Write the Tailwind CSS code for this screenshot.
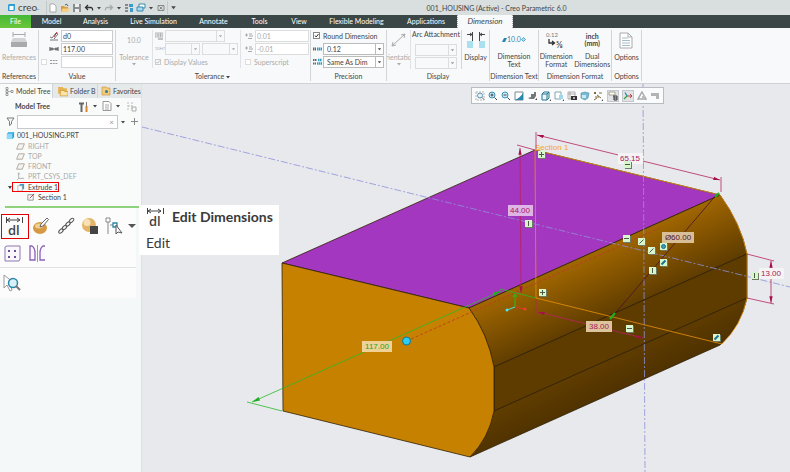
<!DOCTYPE html>
<html lang="en">
<head>
    <meta charset="UTF-8">
    <meta name="viewport" content="width=device-width, initial-scale=1.0">
    <script src="https://cdn.jsdelivr.net/npm/@tailwindcss/browser@4"></script>
    <title>001_HOUSING (Active) - Creo Parametric 6.0</title>
</head>
<body class="flex min-h-screen flex-col overflow-hidden bg-[#e8e9ed] font-['Lato','Open_Sans',sans-serif] text-[7px] leading-[8px] text-[#444]">

    <!-- shared icons -->
    <svg class="hidden">
        <symbol id="down" viewBox="0 0 6 6"><path d="M1 2h4L3 4.5z" fill="currentColor"/></symbol>
        <symbol id="cube" viewBox="0 0 10 10"><path d="M1 3l2-2h6v6L7 9H1z" fill="#2aa3dc"/><path d="M1 3h6v6H1z" fill="#8fd9f7"/><path d="M1 3l2-2h6L7 3z" fill="#55bfea"/></symbol>
        <symbol id="plane" viewBox="0 0 10 10"><path d="M3 2h6.300L7 8H.7z" fill="#f5f3ef" stroke="#aaa69b"/></symbol>
        <symbol id="dims" viewBox="0 0 8 6"><path d="M0 1.500h8M0 4.500h8" stroke="#999" stroke-dasharray="2 .7" /></symbol>
        <symbol id="editdim" viewBox="0 0 20 20"><path d="M2 4h13M5 2L2 4l3 2M12 2l3 2-3 2M1.500 1v6M17.500 1v6" fill="none" stroke="#444"/><text x="3" y="19" font-size="13" font-weight="600" font-family="Open Sans" fill="#444">dl</text></symbol>
    </svg>

    <header class="flex h-[15px] shrink-0 items-center bg-[#d9dfde]">
        <div class="flex w-[47px] shrink-0 items-center gap-[2px] border-r border-[#c3c9c8] pl-[7px] text-[10px] leading-[12px] text-[#444]">
            <svg class="size-[9px]" viewBox="0 0 9 9"><path d="M1 2l1-1h6v6L7 8H1z" fill="#2d9fd3"/><path d="M2.500 3h4v4h-4z" fill="#fff"/></svg>
            <span>creo<span class="text-[6px]">·</span></span>
        </div>
        <button aria-label="New" class="flex w-[12px] justify-center"><svg class="size-[10px]" viewBox="0 0 10 10"><path d="M2 1h4l2 2v6H2z" fill="#fff" stroke="#999" stroke-width=".8"/></svg></button>
        <button aria-label="Open" class="flex w-[12px] justify-center"><svg class="size-[10px]" viewBox="0 0 10 10"><path d="M1 3h3l1 1h3v5H1z" fill="#d99b3e"/><path d="M2.500 5.500H10L8 9H1z" fill="#f6cf7e"/><path d="M5 2q2-2 3 1" fill="none" stroke="#555"/></svg></button>
        <button aria-label="Save" class="flex w-[12px] justify-center"><svg class="size-[10px]" viewBox="0 0 10 10"><path d="M1 1h8v8H1z" fill="#878d91"/><path d="M3 1h4v3H3zM3 6h4v3H3z" fill="#eee"/></svg></button>
        <button aria-label="Undo" class="flex w-[12px] justify-center"><svg class="size-[10px]" viewBox="0 0 10 10"><path d="M2 4.500h4.500q2.500 0 2 3M4 2L1.500 4.500 4 7" fill="none" stroke="#333" stroke-width="1.300"/></svg></button>
        <button aria-label="Undo list" class="flex w-[8px] justify-center"><svg class="size-[6px]"><use href="#down"/></svg></button>
        <button aria-label="Redo" class="flex w-[12px] justify-center"><svg class="size-[10px]" viewBox="0 0 10 10"><path d="M8 4.500H3.500q-2.500 0-2 3M6 2l2.500 2.500L6 7" fill="none" stroke="#a5abab" stroke-width="1.300"/></svg></button>
        <button aria-label="Redo list" class="flex w-[8px] justify-center"><svg class="size-[6px]"><use href="#down"/></svg></button>
        <button aria-label="Regenerate" class="flex w-[12px] justify-center"><svg class="size-[10px]" viewBox="0 0 10 10"><path d="M1 1h3v2H1zM1 4h3v2H1zM1 7h3v2H1z" fill="#888"/><path d="M5 1h4v3H5zM6 5h3v4H6z" fill="#3b9ccc"/></svg></button>
        <button aria-label="Windows" class="flex w-[12px] justify-center"><svg class="size-[10px]" viewBox="0 0 10 10"><path d="M3 1h6v4H3z" fill="#fff" stroke="#3b8ab0"/><path d="M1 4h6v4H1z" fill="#a9dbf0" stroke="#3b8ab0"/></svg></button>
        <button aria-label="Window list" class="flex w-[8px] justify-center"><svg class="size-[6px]"><use href="#down"/></svg></button>
        <button aria-label="Close" class="flex w-[12px] justify-center"><svg class="size-[8px]" viewBox="0 0 8 8"><path d="M1 1.500h6v5H1zM2.500 2.500l3 3M5.500 2.500l-3 3" fill="none" stroke="#666" stroke-width=".7"/></svg></button>
        <button aria-label="Customize" class="flex w-[12px] justify-center border-l border-[#c3c9c8] py-[3px]"><svg class="size-[7px]"><use href="#down"/></svg></button>
        <h1 class="flex-1 pl-[24px] text-center">001_HOUSING (Active) - Creo Parametric 6.0</h1>
    </header>

    <nav class="flex h-[13px] shrink-0 items-stretch bg-[#3b4646] text-center leading-[13px] text-white">
        <a href="#" class="w-[31px] shrink-0 bg-linear-to-b from-[#44b83a] to-[#6bc638]">File</a>
        <a href="#" class="w-[41px] shrink-0">Model</a>
        <a href="#" class="w-[47px] shrink-0">Analysis</a>
        <a href="#" class="w-[69px] shrink-0">Live Simulation</a>
        <a href="#" class="w-[51px] shrink-0">Annotate</a>
        <a href="#" class="w-[41px] shrink-0">Tools</a>
        <a href="#" class="w-[38px] shrink-0">View</a>
        <a href="#" class="w-[77px] shrink-0">Flexible Modeling</a>
        <a href="#" class="w-[62px] shrink-0">Applications</a>
        <a href="#" class="w-[56px] shrink-0 border-x border-dotted border-[#aaa] bg-[#f8f9fb] text-[8px] text-[#444] italic">Dimension</a>
    </nav>

    <section class="flex h-[56px] shrink-0 border-b border-[#cfd3d6] bg-[#f8f9fb] py-[2px] whitespace-nowrap">
        <div class="flex w-[39px] shrink-0 flex-col items-center justify-between border-r border-[#d2d6d9]">
            <button class="flex flex-col items-center gap-[5px] pt-[2px] text-[#aaa]" disabled>
                <svg class="h-[16px] w-[18px]" viewBox="0 0 18 16"><path d="M3 0v5M15 0v5M3 2.500h12" stroke="#aaa" fill="none"/><path d="M3 6l-2 4h16l-2-4z" fill="#d3d3d3"/><path d="M1 10h16v5H1z" fill="#aaa"/></svg>
                References
            </button>
            <span class="leading-[9px]">References</span>
        </div>

        <div class="flex w-[77px] shrink-0 flex-col items-center justify-between border-r border-[#d2d6d9]">
            <div class="flex flex-col gap-px">
                <label class="flex items-center justify-end gap-[2px]">
                    <svg class="size-[10px]" viewBox="0 0 10 10"><path d="M1 9h8M1 6l2 1 4-5 2 1-4 5" fill="none" stroke="#777"/><path d="M5 6l3-5" stroke="#a33"/></svg>
                    <input aria-label="Name" value="d0" class="h-[12px] w-[52px] border border-[#ccc] bg-white px-px">
                </label>
                <label class="flex items-center justify-end gap-[2px]">
                    <svg class="h-[6px] w-[10px]" viewBox="0 0 10 6"><path d="M1 1v4M9 1v4M1 3h8M3 1.500v3M7 1.500v3" stroke="#444" fill="none"/></svg>
                    <input aria-label="Nominal value" value="117.00" class="h-[12px] w-[52px] border border-[#ccc] bg-white px-px">
                </label>
                <div class="flex items-center justify-end gap-[2px]">
                    <input type="checkbox" aria-label="Override" disabled class="size-[6px] appearance-none border border-[#ddd] bg-white">
                    <svg class="h-[6px] w-[10px]"><use href="#dims"/></svg>
                    <input aria-label="Override value" disabled class="h-[12px] w-[52px] border border-[#d5d5d5] bg-white">
                </div>
            </div>
            <span class="leading-[9px]">Value</span>
        </div>

        <div class="flex w-[195px] shrink-0 flex-col items-center justify-between border-r border-[#d2d6d9] text-[#aaa]">
            <div class="flex w-full">
                <button disabled class="flex w-[37px] flex-col items-center border-r border-[#e0e2e5] pt-[6px]">
                    <span class="pb-[9px]">10.0</span>Tolerance<svg class="size-[6px]"><use href="#down"/></svg>
                </button>
                <div class="flex w-[88px] flex-col gap-px border-r border-[#e0e2e5] pl-[2px]">
                    <div class="flex items-center gap-[2px]">
                        <svg class="size-[8px]" viewBox="0 0 8 8"><path d="M0 1h8v4H0zM0 3h8M3 1v4M5.500 1v4" fill="none" stroke="#aaa" stroke-width=".8"/><path d="M3 7h5" stroke="#888"/></svg>
                        <div class="flex h-[12px] w-[60px] items-center border border-[#ddd]"><select aria-label="Tolerance table" disabled class="min-w-0 flex-1 appearance-none"><option></option></select><svg class="h-full w-[8px] border-l border-[#ddd] p-px"><use href="#down"/></svg></div>
                    </div>
                    <div class="flex items-center gap-[2px]">
                        <span class="w-[8px] text-[4px]">10H7</span>
                        <div class="flex h-[12px] w-[35px] items-center border border-[#ddd]"><select aria-label="Table letter" disabled class="min-w-0 flex-1 appearance-none"><option></option></select><svg class="h-full w-[8px] border-l border-[#ddd] p-px"><use href="#down"/></svg></div>
                        <div class="flex h-[12px] w-[36px] items-center border border-[#ddd]"><select aria-label="Table number" disabled class="min-w-0 flex-1 appearance-none"><option></option></select><svg class="h-full w-[8px] border-l border-[#ddd] p-px"><use href="#down"/></svg></div>
                    </div>
                    <label class="flex h-[12px] items-center gap-[3px]">
                        <span class="grid size-[6px]"><input type="checkbox" checked disabled class="col-start-1 row-start-1 size-[6px] appearance-none border border-[#ccc]"><svg class="col-start-1 row-start-1 size-[6px]" viewBox="0 0 6 6"><path d="M1.500 3l1 1.200L4.800 1.500" fill="none" stroke="#aaa" stroke-width=".8"/></svg></span>
                        Display Values
                    </label>
                </div>
                <div class="flex flex-col gap-px pl-[4px]">
                    <label class="flex items-center gap-[2px]"><svg class="size-[8px]" viewBox="0 0 8 8"><path d="M0 3h3M1.500 1.500v3M4 2h3M4 4h4M3 6.500h4" stroke="#aaa"/></svg><input aria-label="Upper tolerance" disabled value="0.01" class="h-[12px] w-[54px] border border-[#ddd] bg-white px-px"></label>
                    <label class="flex items-center gap-[2px]"><svg class="size-[8px]" viewBox="0 0 8 8"><path d="M0 3h3M1.500 1.500v3M4 2h3M4 4h4M3 6.500h4" stroke="#aaa"/></svg><input aria-label="Lower tolerance" disabled value="-0.01" class="h-[12px] w-[54px] border border-[#ddd] bg-white px-px"></label>
                    <label class="flex h-[12px] items-center gap-[3px]"><input type="checkbox" disabled class="size-[6px] appearance-none border border-[#ddd] bg-white">Superscript</label>
                </div>
            </div>
            <button class="flex items-center gap-px leading-[9px] text-[#444]">Tolerance<svg class="size-[6px]"><use href="#down"/></svg></button>
        </div>

        <div class="flex w-[76px] shrink-0 flex-col items-center justify-between border-r border-[#d2d6d9]">
            <div class="flex flex-col gap-px">
                <label class="flex h-[11px] items-center gap-[3px]">
                    <span class="grid size-[7px]"><input type="checkbox" checked class="col-start-1 row-start-1 size-[7px] appearance-none border border-[#888] bg-white"><svg class="pointer-events-none col-start-1 row-start-1 size-[7px]" viewBox="0 0 7 7"><path d="M2 3.500l1.200 1.500L5.500 2" fill="none" stroke="#333"/></svg></span>
                    Round Dimension
                </label>
                <div class="flex items-center gap-px pt-px">
                    <svg class="h-[6px] w-[9px]" viewBox="0 0 9 6"><path d="M0 3h3" stroke="#666" stroke-width="3" stroke-dasharray="1.500 .5"/><path d="M4 3h5" stroke="#2b9cc4" stroke-width="3" stroke-dasharray="1.500 .5"/></svg>
                    <div class="flex h-[12px] w-[61px] items-center border border-[#bbb] bg-white"><select aria-label="Decimal places" class="min-w-0 flex-1 appearance-none pl-[3px]"><option>0.12</option></select><svg class="h-full w-[8px] border-l border-[#bbb] p-px"><use href="#down"/></svg></div>
                </div>
                <div class="flex items-center gap-px">
                    <svg class="h-[8px] w-[9px]" viewBox="0 0 9 8"><path d="M0 2h4M0 5.500h3" stroke="#666" stroke-width="2" stroke-dasharray="1.500 .5"/><path d="M5 2h4M4 5.500h5" stroke="#2b9cc4" stroke-width="2.500" stroke-dasharray="1.500 .5"/></svg>
                    <div class="flex h-[12px] w-[61px] items-center border border-[#bbb] bg-white"><select aria-label="Tolerance decimal places" class="min-w-0 flex-1 appearance-none pl-[3px]"><option>Same As Dim</option></select><svg class="h-full w-[8px] border-l border-[#bbb] p-px"><use href="#down"/></svg></div>
                </div>
            </div>
            <span class="leading-[9px]">Precision</span>
        </div>

        <div class="flex w-[103px] shrink-0 flex-col justify-between border-r border-[#d2d6d9]">
            <div class="flex">
                <button disabled class="flex w-[24px] flex-col items-center overflow-hidden border-r border-[#e0e2e5] pt-px text-[#aaa]">
                    <svg class="h-[22px] w-[20px]" viewBox="0 0 20 22"><path d="M3 15L16 3M4 11l-1 4 4-1M12 4l4-1-1 4" fill="none" stroke="#aaa"/></svg>
                    rientatic<svg class="size-[6px]"><use href="#down"/></svg>
                </button>
                <div class="flex w-[51px] flex-col items-center gap-px border-r border-[#d2d6d9]">
                    <span class="h-[13px] leading-[8px]">Arc Attachment</span>
                    <div class="flex h-[12px] w-[42px] items-center border border-[#ddd]"><select aria-label="First arc" disabled class="min-w-0 flex-1 appearance-none"><option></option></select><svg class="h-full w-[8px] border-l border-[#ddd] p-px text-[#999]"><use href="#down"/></svg></div>
                    <div class="flex h-[12px] w-[42px] items-center border border-[#ddd]"><select aria-label="Second arc" disabled class="min-w-0 flex-1 appearance-none"><option></option></select><svg class="h-full w-[8px] border-l border-[#ddd] p-px text-[#999]"><use href="#down"/></svg></div>
                </div>
                <button class="flex flex-1 flex-col items-center gap-[4px] pt-px">
                    <svg class="h-[18px] w-[18px]" viewBox="0 0 18 18"><path d="M0 10h6v7H0zM12 10h6v7h-6z" fill="#aadff0"/><path d="M5.500 1v9M12.500 1v9M0 3.500h5M13 3.500h5M3 2l2 1.500L3 5M15 2l-2 1.500L15 5" fill="none" stroke="#444"/></svg>
                    Display
                </button>
            </div>
            <span class="text-center leading-[9px]">Display</span>
        </div>

        <div class="flex w-[49px] shrink-0 flex-col items-center justify-between border-r border-[#d2d6d9]">
            <button class="flex flex-col items-center gap-[9px] pt-[5px]">
                <span class="flex items-center text-[#3986a8]"><svg class="h-[7px] w-[5px]" viewBox="0 0 5 7"><path d="M0 6l2-4h3L3 6z" fill="#2387b5"/></svg>10.0<svg class="size-[5px]" viewBox="0 0 5 5"><path d="M2.500.5l2 2-2 2-2-2z" fill="#aadff0" stroke="#2387b5" stroke-width=".7"/></svg></span>
                <span>Dimension<br>Text</span>
            </button>
            <span class="leading-[9px]">Dimension Text</span>
        </div>

        <div class="flex w-[73px] shrink-0 flex-col items-center justify-between border-r border-[#d2d6d9]">
            <div class="flex w-full justify-around">
                <button class="flex flex-col items-center gap-[2px]">
                    <svg class="h-[20px] w-[20px]" viewBox="0 0 20 20" font-family="Lato"><text x="0" y="7" font-size="6" fill="#777">0.12</text><path d="M3 9v4h5M6 11l2.500 2L6 15" fill="none" stroke="#333" stroke-width="1.300"/><text x="10" y="18" font-size="9" fill="#333">⅝</text></svg>
                    <span>Dimension<br>Format</span>
                </button>
                <button class="flex flex-col items-center gap-[5px]">
                    <span class="pt-[3px] leading-[7px] font-bold">inch<br>(mm)</span>
                    <span>Dual<br>Dimensions</span>
                </button>
            </div>
            <span class="leading-[9px]">Dimension Format</span>
        </div>

        <div class="flex w-[30px] shrink-0 flex-col items-center justify-between border-r border-[#d2d6d9]">
            <button class="flex flex-col items-center gap-[4px] pt-[2px]">
                <svg class="h-[17px] w-[14px]" viewBox="0 0 14 17"><path d="M1 1h8l4 4v11H1z" fill="#fff" stroke="#aaa"/><path d="M9 1v4h4" fill="none" stroke="#aaa"/><path d="M3 6h6M3 8.500h8M3 11h8M3 13.500h8" stroke="#a3bfca"/></svg>
                Options
            </button>
            <span class="leading-[9px]">Options</span>
        </div>
    </section>

    <main class="relative flex flex-1">
        <aside class="flex w-[142px] shrink-0 flex-col border-r border-[#dce1e4] bg-[#f5f8f9]">
            <div class="flex h-[14px] shrink-0 items-center bg-[#e5e9ea] whitespace-nowrap">
                <button class="flex h-full w-[52px] items-center gap-[2px] bg-[#f9fbfb] pl-[5px]"><svg class="size-[9px]" viewBox="0 0 9 9"><path d="M2 1v7M2 4.500h5" stroke="#888" fill="none" stroke-width=".6"/><path d="M1 .5h2v2H1zM1 3.500h2v2H1zM1 6.500h2v2H1zM6 3.500h2v2H6z" fill="#fff" stroke="#888" stroke-width=".8"/></svg>Model Tree</button>
                <button class="flex h-full w-[46px] items-center gap-[2px] overflow-hidden border-x border-[#d2d6d9] pl-[4px]"><svg class="size-[11px] shrink-0" viewBox="0 0 10 10"><path d="M1 1h4l1 1h3v5H1z" fill="#e8b453"/><path d="M3 4h3l1 1h3v4H3z" fill="#fbe3a5" stroke="#c78e2f" stroke-width=".6"/></svg>Folder B</button>
                <button class="flex h-full flex-1 items-center gap-[2px] pl-[3px]"><svg class="size-[10px]" viewBox="0 0 10 10"><path d="M1 1h4l1 1h3v7H1z" fill="#f3cc7b" stroke="#c78e2f" stroke-width=".6"/><circle cx="5.500" cy="5.500" r="1.500" fill="#2e7c9a"/></svg>Favorites</button>
            </div>
            <div class="flex h-[16px] shrink-0 items-center bg-[#f9fbfb] pr-[4px] pl-[15px]">
                <h2 class="flex-1 font-bold">Model Tree</h2>
                <button aria-label="Settings" class="flex items-center gap-[3px] pr-[4px]"><svg class="size-[11px]" viewBox="0 0 11 11"><path d="M1 2.500h5M3.500 3v8" stroke="#666" stroke-width="2"/><path d="M8.500 1v4" stroke="#777"/><path d="M8.500 5v6" stroke="#d4872b" stroke-width="2"/></svg><svg class="size-[6px]"><use href="#down"/></svg></button>
                <button aria-label="Show" class="flex items-center gap-[3px] pr-[5px]"><svg class="size-[10px]" viewBox="0 0 10 10"><path d="M1 .5h6l2 2v7H1z" fill="#fff" stroke="#999"/><path d="M3 4h4M3 6h4M3 8h4" stroke="#888" stroke-width=".7"/></svg><svg class="size-[6px]"><use href="#down"/></svg></button>
                <button aria-label="Expand" class="flex"><svg class="size-[11px]" viewBox="0 0 11 11"><path d="M2 1v9M2 5h4M6 1v7" stroke="#bbb" stroke-dasharray="2 1" fill="none"/><path d="M6 6h4v4H6z" fill="none" stroke="#aaa"/></svg></button>
            </div>
            <div class="flex h-[15px] shrink-0 items-center gap-[2px] bg-[#f9fbfb] pl-[6px]">
                <svg class="size-[9px]" viewBox="0 0 9 9"><path d="M1 1h7L5.500 4.500V7l-2 1.500v-4z" fill="none" stroke="#777"/></svg>
                <div class="flex h-[14px] w-[101px] items-center border border-[#c5c9cb] bg-white pr-[3px]">
                    <input aria-label="Search the tree" class="min-w-0 flex-1">
                    <button aria-label="Clear" class="text-[8px] text-[#999]">×</button>
                </div>
                <button aria-label="Search options"><svg class="size-[6px]"><use href="#down"/></svg></button>
                <button aria-label="Add filter" class="pl-[3px]"><svg class="size-[7px]" viewBox="0 0 7 7"><path d="M3.500 0v7M0 3.500h7" stroke="#888"/></svg></button>
            </div>
            <ul class="flex shrink-0 flex-col bg-[#f9fbfb] pb-[4px] leading-[10px]">
                <li class="flex h-[12px] items-center gap-[2px] pl-[6px]"><svg class="size-[9px]"><use href="#cube"/></svg>001_HOUSING.PRT</li>
                <li class="flex h-[10px] items-center gap-[3px] pl-[16px] text-[#aaa]"><svg class="size-[9px]"><use href="#plane"/></svg>RIGHT</li>
                <li class="flex h-[10px] items-center gap-[3px] pl-[16px] text-[#aaa]"><svg class="size-[9px]"><use href="#plane"/></svg>TOP</li>
                <li class="flex h-[10px] items-center gap-[3px] pl-[16px] text-[#aaa]"><svg class="size-[9px]"><use href="#plane"/></svg>FRONT</li>
                <li class="flex h-[10px] items-center gap-[3px] pl-[16px] text-[#aaa]"><svg class="size-[9px]" viewBox="0 0 10 10"><path d="M3 1v6h6M3 7L1 9M2 2.500L3 1l1 1.500" fill="none" stroke="#aaa"/></svg>PRT_CSYS_DEF</li>
                <li class="flex h-[11px] items-center pl-[8px]">
                    <svg class="size-[4px]" viewBox="0 0 4 4"><path d="M0 1h4L2 4z" fill="#444"/></svg>
                    <span class="flex h-[10px] w-[47px] items-center gap-[3px] border border-[#f00000] pl-[4px] leading-[8px]"><svg class="size-[8px]" viewBox="0 0 9 9"><path d="M3 1h5v6H3z" fill="#3e9fc8"/><path d="M1 3h5v6H1z" fill="#fff" stroke="#888" stroke-width=".6"/></svg>Extrude 1</span>
                </li>
                <li class="flex h-[10px] items-center gap-[3px] pl-[27px]"><svg class="size-[8px]" viewBox="0 0 9 9"><path d="M1 2h6v6H1z" fill="#fff" stroke="#888"/><path d="M3 6l5-5" stroke="#b33"/></svg>Section 1</li>
            </ul>
            <hr class="ml-[5px] h-[2px] shrink-0 border-0 bg-[#8ed27c]">
            <div class="flex w-[136px] shrink-0 flex-col bg-[#fcfcfc]">
                <div class="flex h-[36px] items-center gap-[4px] pl-px">
                    <button aria-label="Edit Dimensions" class="flex h-[25px] w-[29px] items-center justify-center border border-[#e00000]"><svg class="size-[20px]"><use href="#editdim"/></svg></button>
                    <button aria-label="Edit Definition" class="flex w-[20px]"><svg class="size-[18px]" viewBox="0 0 18 18"><ellipse cx="7" cy="11" rx="7" ry="6" fill="#d69a45"/><ellipse cx="6" cy="9" rx="4" ry="2.500" fill="#f1d096"/><path d="M7 10l1-3 6-6 1.500 1.500L10 9z" fill="#fff" stroke="#666"/></svg></button>
                    <button aria-label="Edit References" class="flex w-[21px]"><svg class="size-[18px]" viewBox="0 0 18 18"><g fill="none" stroke="#555"><ellipse cx="4" cy="14" rx="2.800" ry="1.500" transform="rotate(-45 4 14)"/><ellipse cx="7.500" cy="10.500" rx="2.800" ry="1.500" transform="rotate(-45 7.500 10.500)"/><ellipse cx="11" cy="7" rx="2.800" ry="1.500" transform="rotate(-45 11 7)"/><ellipse cx="14.500" cy="3.500" rx="2.800" ry="1.500" transform="rotate(-45 14.500 3.500)"/></g></svg></button>
                    <button aria-label="Suppress" class="flex w-[20px]"><svg class="size-[18px]" viewBox="0 0 18 18"><circle cx="8" cy="8" r="7" fill="#e3b56a"/><circle cx="6" cy="5.500" r="3.500" fill="#f8e1b4"/><path d="M9 9h8v8H9z" fill="#444"/></svg></button>
                    <button aria-label="Select" class="flex items-center gap-[5px]"><svg class="size-[18px]" viewBox="0 0 18 18"><path d="M3 4v13M5 8h4" fill="none" stroke="#888"/><path d="M1 1h4v4H1z" fill="#fff" stroke="#888"/><path d="M8 6h4v4H8z" fill="#fff" stroke="#2a86a8" stroke-width="1.300"/><path d="M11 8v9l2-2 4 1z" fill="#fff" stroke="#555"/></svg><svg class="h-[6px] w-[8px]" viewBox="0 0 8 6"><path d="M0 1h8L4 5z" fill="#555"/></svg></button>
                </div>
                <div class="flex h-[24px] items-center gap-[8px] border-b border-[#dfe2e3] pb-[4px] pl-[4px]">
                    <button aria-label="Pattern"><svg class="size-[17px]" viewBox="0 0 17 17"><path d="M1 2l2-1h13v13l-1 2H1z" fill="#faf8fd" stroke="#8f78b0"/><path d="M4 5h2v2H4zM10 5h2v2h-2zM4 11h2v2H4zM10 11h2v2h-2z" fill="#6c4e9a"/></svg></button>
                    <button aria-label="Mirror"><svg class="size-[17px]" viewBox="0 0 17 17"><path d="M1 1h2q3 2 3 7v7H1zM16 1h-2q-3 2-3 7v7h5" fill="#faf7ff" stroke="#8961b5" stroke-width="1.300"/><path d="M8.500 0v17" stroke="#999"/></svg></button>
                </div>
                <div class="flex h-[30px] items-center pl-[3px]">
                    <button aria-label="Zoom to selected"><svg class="size-[18px]" viewBox="0 0 18 18"><path d="M1 1v13l3-3 3 6 2-1-2-6 4-1z" fill="#fff" stroke="#999"/><circle cx="10" cy="9" r="4.500" fill="#d7f0fa" stroke="#2a86a8" stroke-width="1.500"/><path d="M13 12l4 4" stroke="#777" stroke-width="2"/></svg></button>
                </div>
            </div>
        </aside>

        <!-- model view -->
        <div class="relative flex-1 overflow-hidden">
            <svg class="absolute inset-0 size-full" viewBox="142 84 648 388" preserveAspectRatio="xMinYMin slice" font-family="Liberation Sans" font-size="8">
                <defs>
                    <linearGradient id="side" gradientUnits="userSpaceOnUse" x1="594" y1="251" x2="621" y2="310"><stop offset="0" stop-color="#a26700"/><stop offset="1" stop-color="#603d00"/></linearGradient>
                    <linearGradient id="under" gradientUnits="userSpaceOnUse" x1="620" y1="355" x2="638" y2="393"><stop offset="0" stop-color="#5f3c00"/><stop offset="1" stop-color="#4a2f00"/></linearGradient>
                    <marker id="tipP" viewBox="0 0 8 6" refX="8" refY="3" markerWidth="7" markerHeight="5" markerUnits="userSpaceOnUse" orient="auto-start-reverse"><path d="M0 1l8 2-8 2z" fill="#a50f4d"/></marker>
                    <marker id="tipG" viewBox="0 0 8 6" refX="8" refY="3" markerWidth="8" markerHeight="6" markerUnits="userSpaceOnUse" orient="auto-start-reverse"><path d="M0 1l8 2-8 2z" fill="#1fae1f"/></marker>
                    <symbol id="con" viewBox="0 0 8 8"><path d="M1 1h7v7H1z" fill="#6c7a62"/><path d="M0 0h7v7H0z" fill="#d9f5cd"/></symbol>
                </defs>

                <g stroke="#2e2005" stroke-width=".8" stroke-linejoin="round">
                    <path d="M282 263L535 150 720 195 469 308z" fill="#a437c0"/>
                    <path d="M469 308L720 195Q741 224 747 254L494 367Q488 334 469 308z" fill="url(#side)"/>
                    <path d="M494 367L747 254V298L494 411z" fill="#5e3c00"/>
                    <path d="M494 411L747 298Q741 326 720 345L470 457Q489 438 494 411z" fill="url(#under)"/>
                    <path d="M282 263L469 308Q488 334 494 367V411Q489 438 470 457L283 411z" fill="#c68100"/>
                </g>

                <!-- datum planes -->
                <g fill="none" stroke="#8b92d8" stroke-width=".8" stroke-dasharray="7 2 2 2">
                    <path d="M142 127L790 287"/>
                    <path d="M643 84L645 472"/>
                </g>

                <!-- sketch -->
                <g fill="none" stroke="#e8920f" stroke-width=".8">
                    <path d="M535 150L720 195Q741 224 747 254V298Q741 326 722 344L536 298z"/>
                </g>
                <text x="535" y="150" fill="#f5a623">Section 1</text>

                <path d="M411 339L660 228" stroke="#b83a30" stroke-width=".8" stroke-dasharray="3 2" fill="none"/>
                <path d="M717 194L612 317" stroke="#4a1230" stroke-width=".8" fill="none"/>
                <path d="M715 197l4-4M610 319l5-6" stroke="#20b020" stroke-width="2"/>

                <g fill="none" stroke="#b52560" stroke-width=".8">
                    <path d="M536 132V149M721 177V192M517 145L535 150M536 300V315M747 254L774 261M747 298L774 304"/>
                    <path d="M537 135L720 180" marker-start="url(#tipP)" marker-end="url(#tipP)"/>
                    <path d="M520 148L521 293" marker-start="url(#tipP)" marker-end="url(#tipP)"/>
                    <path d="M538 312L643 338" marker-start="url(#tipP)" marker-end="url(#tipP)"/>
                    <path d="M771 261V303" marker-start="url(#tipP)" marker-end="url(#tipP)"/>
                </g>
                <g fill="none" stroke="#2bb92b" stroke-width=".8">
                    <path d="M252 402L501 291" marker-start="url(#tipG)" marker-end="url(#tipG)"/>
                    <path d="M247 402L282 411M500 289L536 298"/>
                </g>
                <path d="M515 307V294M513 297l2-3 2 3" stroke="#20c020" fill="none"/>
                <path d="M515 307l9 2" stroke="#e03a20"/><circle cx="525" cy="309" r="1.500" fill="#f04030"/>
                <path d="M515 307l-8 3" stroke="#4de0e0"/><circle cx="507" cy="310" r="1.500" fill="#4de8ef"/>
                <circle cx="406.500" cy="341" r="4" fill="#29cdf5" stroke="#1b7386"/>

                <!-- dimension values -->
                <g text-anchor="middle" fill="#a8185c">
                    <path d="M618 153h25v11h-25zM759 268h25v11h-25z" fill="#f6f3f5"/>
                    <path d="M508 205h25v11h-25z" fill="#dfb4e6"/>
                    <path d="M586 321h26v11h-26z" fill="#dcc49c"/>
                    <path d="M662 232h32v11h-32z" fill="#d8bf98"/>
                    <path d="M362 341h30v11h-30z" fill="#eed197"/>
                    <text x="630" y="161">65.15</text>
                    <text x="520" y="213">44.00</text>
                    <text x="599" y="329">38.00</text>
                    <text x="771" y="276">13.00</text>
                    <text x="678" y="240" fill="#4f1334">Ø60.00</text>
                    <text x="377" y="349" fill="#25a325">117.00</text>
                </g>

                <!-- constraints -->
                <g>
                    <use href="#con" x="538" y="151" width="8" height="8"/><use href="#con" x="624" y="161" width="8" height="8"/><use href="#con" x="525" y="220" width="8" height="8"/>
                    <use href="#con" x="623" y="235" width="8" height="8"/><use href="#con" x="638" y="238" width="8" height="8"/><use href="#con" x="648" y="247" width="8" height="8"/>
                    <use href="#con" x="660" y="243" width="8" height="8"/><use href="#con" x="660" y="259" width="8" height="8"/><use href="#con" x="649" y="267" width="8" height="8"/>
                    <use href="#con" x="539" y="289" width="8" height="8"/><use href="#con" x="626" y="325" width="8" height="8"/><use href="#con" x="713" y="334" width="8" height="8"/>
                    <use href="#con" x="751" y="272" width="8" height="8"/>
                    <path d="M539 154.500h5M541.500 152v5M625 164.500h5M528.500 221v5M624 238.500h5M639.500 243.500l4-4M649.500 252.500l4-4M652.500 268v5M540 292.500h5M542.500 290v5M627 328.500h5M754.500 273v5" stroke="#4a5a45"/>
                    <path d="M661.500 264.500l4-4M714.500 339.500l4-4" stroke="#1e7090" stroke-width="2"/>
                    <circle cx="663.500" cy="246.500" r="2" fill="#3d9caa" stroke="#1e7090"/>
                </g>
            </svg>

            <div class="absolute top-[3px] left-[329px] flex h-[17px] w-[193px] items-center justify-around border border-[#b9bcc0] bg-[#fafbfc] px-px">
                <button aria-label="Refit"><svg class="size-[10px]" viewBox="0 0 10 10"><path d="M1 1h8v8H1z" fill="none" stroke="#999" stroke-dasharray="2 1" stroke-width=".7"/><circle cx="5" cy="4.500" r="2.500" fill="#e2f3fa" stroke="#5a91a8"/><path d="M7 6.500l2 2" stroke="#666"/></svg></button>
                <button aria-label="Zoom In"><svg class="size-[10px]" viewBox="0 0 10 10"><circle cx="4" cy="4" r="3" fill="#cdebf7" stroke="#3a91b8"/><path d="M6.500 6.500L9 9M2.500 4h3M4 2.500v3" stroke="#444"/></svg></button>
                <button aria-label="Zoom Out"><svg class="size-[10px]" viewBox="0 0 10 10"><circle cx="4" cy="4" r="3" fill="#cdebf7" stroke="#3a91b8"/><path d="M6.500 6.500L9 9M2.500 4h3" stroke="#444"/></svg></button>
                <button aria-label="Repaint"><svg class="size-[10px]" viewBox="0 0 10 10"><path d="M1 1h8v8H1z" fill="#fff" stroke="#7d8a90"/><path d="M1 9q5-2 8-7v7z" fill="#2a88aa"/></svg></button>
                <button aria-label="Rendering"><svg class="size-[10px]" viewBox="0 0 10 10"><path d="M1 7l3-1V3h3V1h2v4L7 8H3z" fill="#777"/><path d="M8 9h2V7z" fill="#444"/></svg></button>
                <button aria-label="Display Style"><svg class="size-[10px]" viewBox="0 0 10 10"><path d="M1 3h5v6H1zM1 3l2-2h5v6L6 9M6 3l2-2" fill="#e9f7fc" stroke="#26738f"/><path d="M8.500 10H10V8z" fill="#444"/></svg></button>
                <button aria-label="Saved Orientations"><svg class="size-[10px]" viewBox="0 0 10 10"><path d="M1 1h6v7H1z" fill="#fff" stroke="#85a5b2"/><path d="M5 4h4v4H5z" fill="#9ed6eb"/><path d="M8.500 10H10V8z" fill="#444"/></svg></button>
                <button aria-label="View Manager"><svg class="size-[10px]" viewBox="0 0 10 10"><path d="M1 1h7v7H1zM1 3h7M3 1v7" fill="#fff" stroke="#999" stroke-width=".8"/><path d="M4 5h6v4H4z" fill="#333"/><circle cx="7" cy="7" r="1" fill="#ddd"/></svg></button>
                <button aria-label="Perspective View"><svg class="size-[10px]" viewBox="0 0 10 10"><path d="M1 2l4-1 4 1-1 5-3 2-4-2z" fill="#78b9d2" stroke="#498eac" stroke-width=".6"/><path d="M2 4h4v3H2z" fill="#cceaf4"/></svg></button>
                <button aria-label="Datum Display"><svg class="size-[10px]" viewBox="0 0 10 10"><path d="M1 1l2 2M3 1L1 3M2 6h4M4 4l4 3M6 2h3M1 9l3-2" stroke="#856a35"/><path d="M8.500 10H10V8z" fill="#444"/></svg></button>
                <button aria-label="Annotation Display" class="border border-[#c4c7cb] bg-[#e1e3e6]"><svg class="size-[10px]" viewBox="0 0 10 10"><path d="M1 1h6v3H1z" fill="#fffbe0" stroke="#888" stroke-width=".7"/><path d="M5 5h4v4H6V5M6 7h3" fill="none" stroke="#333"/></svg></button>
                <button aria-label="Spin Center" class="border border-[#c4c7cb] bg-[#e1e3e6]"><svg class="size-[10px]" viewBox="0 0 10 10"><path d="M4 5L2 1.500" stroke="#278eae" stroke-width="1.300"/><path d="M4 5L1 8" stroke="#35a046" stroke-width="1.300"/><path d="M4 5h5M7 3l2 2-2 2" fill="none" stroke="#bd4037"/></svg></button>
                <button aria-label="Simulate" disabled><svg class="size-[10px]" viewBox="0 0 10 10"><path d="M5 1l4 7H1z" fill="none" stroke="#aaa" stroke-width="1.500"/><path d="M5 5h3v4H5z" fill="#bbb"/></svg></button>
                <button aria-label="Clearance" disabled><svg class="size-[10px]" viewBox="0 0 10 10"><path d="M1 2h8v6H6V5H1z" fill="#b4b4b4"/></svg></button>
            </div>
        </div>

        <div role="tooltip" class="absolute top-[121px] left-[139px] flex h-[50px] w-[140px] flex-col gap-[8px] bg-white pt-[2px] pl-[7px] leading-[20px] whitespace-nowrap text-[#3a3a3a]">
            <div class="flex items-center gap-[6px] text-[14px] font-bold"><svg class="size-[20px]"><use href="#editdim"/></svg>Edit Dimensions</div>
            <span class="text-[14px] leading-[16px]">Edit</span>
        </div>
    </main>
</body>
</html>
